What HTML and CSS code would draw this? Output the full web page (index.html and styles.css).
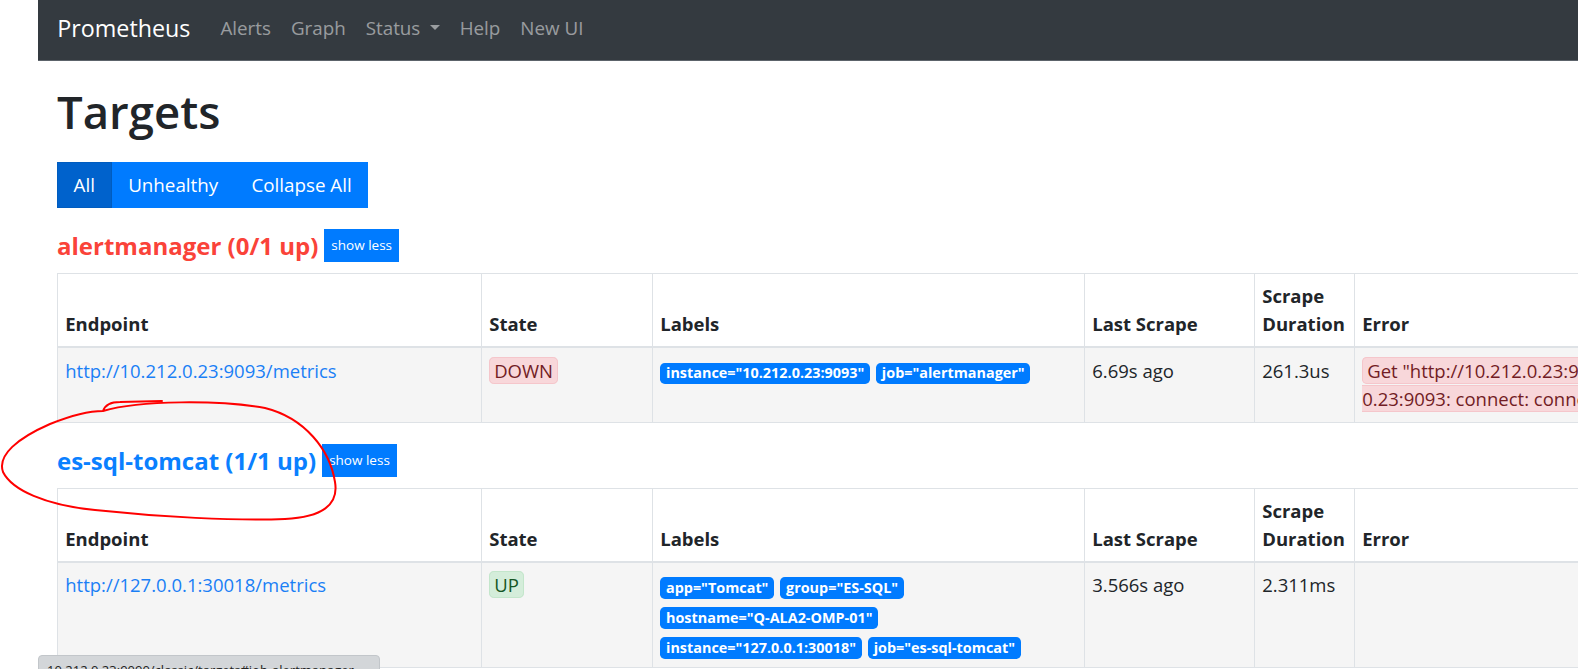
FILE: index.html
```html
<!DOCTYPE html>
<html lang="en">
<head>
<meta charset="utf-8">
<title>Prometheus Time Series Collection and Processing Server</title>
<link rel="stylesheet" href="styles.css">
</head>
<body>
<div class="page">
  <nav class="navbar">
    <a class="brand" href="#">Prometheus</a>
    <ul class="nav">
      <li><a href="#">Alerts</a></li>
      <li><a href="#">Graph</a></li>
      <li><a href="#">Status<span class="caret"></span></a></li>
      <li><a href="#">Help</a></li>
      <li><a href="#">New UI</a></li>
    </ul>
  </nav>
  <main class="container">
    <h1>Targets</h1>
    <div class="btn-group">
      <button class="btn active">All</button>
      <button class="btn">Unhealthy</button>
      <button class="btn">Collapse All</button>
    </div>

    <section class="pool">
      <div class="pool-head">
        <a class="pool-title danger" href="#job-alertmanager">alertmanager (0/1 up)</a>
        <button class="btn-less">show less</button>
      </div>
      <table class="targets">
        <colgroup>
          <col class="c-endpoint"><col class="c-state"><col class="c-labels"><col class="c-last"><col class="c-dur"><col class="c-err">
        </colgroup>
        <thead>
          <tr><th>Endpoint</th><th>State</th><th>Labels</th><th>Last Scrape</th><th>Scrape Duration</th><th>Error</th></tr>
        </thead>
        <tbody>
          <tr>
            <td><a class="endpoint" href="#">http://10.212.0.23:9093/metrics</a></td>
            <td><span class="state down">DOWN</span></td>
            <td><div class="labels"><span class="badge">instance="10.212.0.23:9093"</span><span class="badge">job="alertmanager"</span></div></td>
            <td>6.69s ago</td>
            <td>261.3us</td>
            <td><span class="state down">Get "http://10.212.0.23:9093/metrics": dial tcp 10.212.<br>0.23:9093: connect: connection refused</span></td>
          </tr>
        </tbody>
      </table>
    </section>

    <section class="pool">
      <div class="pool-head">
        <a class="pool-title ok" href="#job-es-sql-tomcat">es-sql-tomcat (1/1 up)</a>
        <button class="btn-less">show less</button>
      </div>
      <table class="targets">
        <colgroup>
          <col class="c-endpoint"><col class="c-state"><col class="c-labels"><col class="c-last"><col class="c-dur"><col class="c-err">
        </colgroup>
        <thead>
          <tr><th>Endpoint</th><th>State</th><th>Labels</th><th>Last Scrape</th><th>Scrape Duration</th><th>Error</th></tr>
        </thead>
        <tbody>
          <tr>
            <td><a class="endpoint" href="#">http://127.0.0.1:30018/metrics</a></td>
            <td><span class="state up">UP</span></td>
            <td><div class="labels"><span class="badge">app="Tomcat"</span><span class="badge">group="ES-SQL"</span><span class="badge">hostname="Q-ALA2-OMP-01"</span><span class="badge">instance="127.0.0.1:30018"</span><span class="badge">job="es-sql-tomcat"</span></div></td>
            <td>3.566s ago</td>
            <td>2.311ms</td>
            <td></td>
          </tr>
        </tbody>
      </table>
    </section>
  </main>
</div>

<svg class="annotation" width="360" height="540" viewBox="0 0 360 540" aria-hidden="true">
  <path d="M 103 411 C 140 400, 220 400, 265 408 C 305 418, 330 450, 335 482 C 339 505, 322 517, 285 519 C 235 521, 160 517, 95 510 C 45 505, 12 490, 3 472 C -3 455, 18 438, 50 424 C 70 416, 90 411, 103 411 M 103 411 C 105 405, 110 402, 120 402 L 162 401" />
</svg>

<div class="statusbar">10.212.0.23:9090/classic/targets#job-alertmanager</div>
</body>
</html>
```

FILE: styles.css
```css
* { box-sizing: border-box; }

html, body {
  margin: 0;
  padding: 0;
  overflow: hidden;
  background: #fff;
}

body {
  font-family: "Open Sans", "Noto Sans", sans-serif;
  font-size: 18.5px;
  line-height: 28.8px;
  color: #212529;
  position: relative;
}

.page {
  margin-left: 38px;
}

/* ---------- navbar ---------- */
.navbar {
  height: 61px;
  background: #343a40;
  border-bottom: 1px solid #5c636a;
  display: flex;
  align-items: center;
  padding: 0 19.2px 4px;
}

.brand {
  color: #fff;
  font-size: 23.3px;
  line-height: 36px;
  text-decoration: none;
  margin-right: 20px;
}

.nav {
  list-style: none;
  margin: 0;
  padding: 0;
  display: flex;
}

.nav a {
  display: block;
  padding: 0 10px;
  color: rgba(255, 255, 255, .5);
  text-decoration: none;
  font-size: 18.8px;
  line-height: 28.8px;
}

.caret {
  display: inline-block;
  margin-left: .5em;
  vertical-align: .22em;
  border-top: .3em solid;
  border-right: .3em solid transparent;
  border-left: .3em solid transparent;
}

/* ---------- content ---------- */
.container {
  padding: 0 19px;
}

h1 {
  font-size: 45.5px;
  font-weight: 600;
  line-height: 1.2;
  margin: 23px 0 23px;
}

.btn-group {
  display: inline-flex;
}

.btn {
  font-family: inherit;
  font-size: 18.8px;
  line-height: 28.8px;
  padding: 8px 15.6px;
  border: 1px solid #007bff;
  background: #007bff;
  color: #fff;
  border-radius: 0;
  margin: 0;
}

.btn.active {
  background: #0062cc;
  border-color: #005cbf;
}

.pool-head {
  display: flex;
  align-items: center;
  gap: 6px;
  margin-top: 21px;
  height: 33px;
}

.pool-title {
  font-size: 24px;
  font-weight: 700;
  line-height: 33px;
  text-decoration: none;
}

.pool-title.danger { color: #fa4339; }
.pool-title.ok { color: #0a80ff; }

.btn-less {
  font-family: inherit;
  font-size: 13.5px;
  line-height: 21px;
  padding: 6px 7px;
  border: 0;
  background: #007bff;
  color: #fff;
  border-radius: 0;
}

/* ---------- table ---------- */
.targets {
  border-collapse: collapse;
  table-layout: fixed;
  width: 1920px;
  margin-top: 11px;
}

.c-endpoint { width: 424px; }
.c-state { width: 171px; }
.c-labels { width: 432px; }
.c-last { width: 170px; }
.c-dur { width: 100px; }
.c-err { width: 623px; }

.targets th,
.targets td {
  border: 1px solid #dee2e6;
  padding: 7.2px;
  text-align: left;
  vertical-align: top;
}

.targets td {
  padding-top: 8.2px;
  padding-bottom: 8.2px;
}

.targets thead th {
  vertical-align: bottom;
  border-bottom: 2px solid #dee2e6;
  font-weight: 700;
}

.targets tbody tr {
  background: #f5f5f5;
}

.endpoint {
  color: #1a7ff5;
  text-decoration: none;
}

.state {
  padding: 0 4px;
  border: 1px solid;
  border-radius: 4.8px;
}

.state.down {
  background: #f8d7da;
  border-color: #f5c6cb;
  color: #721c24;
}

.state.up {
  background: #d4edda;
  border-color: #c3e6cb;
  color: #155724;
}

.labels {
  display: flex;
  flex-wrap: wrap;
  gap: 8.4px 6px;
  padding-top: 6px;
}

.badge {
  display: inline-block;
  background: #007bff;
  color: #fff;
  font-size: 14.4px;
  font-weight: 700;
  line-height: 14.4px;
  padding: 3.6px 5.8px;
  border-radius: 4.8px;
  white-space: nowrap;
}

/* ---------- overlays ---------- */
.annotation {
  position: absolute;
  left: 0;
  top: 0;
  pointer-events: none;
  z-index: 5;
}

.annotation path {
  fill: none;
  stroke: #f00;
  stroke-width: 2;
  stroke-linecap: round;
  stroke-linejoin: round;
}

.statusbar {
  position: fixed;
  left: 38px;
  top: 655px;
  width: 342px;
  height: 26px;
  background: #d3d6d9;
  border: 1px solid #c2c6ca;
  border-radius: 4px 4px 0 0;
  font-size: 13px;
  line-height: 16px;
  color: #222;
  padding: 6px 8px 0;
  white-space: nowrap;
  overflow: hidden;
  z-index: 6;
}
```
